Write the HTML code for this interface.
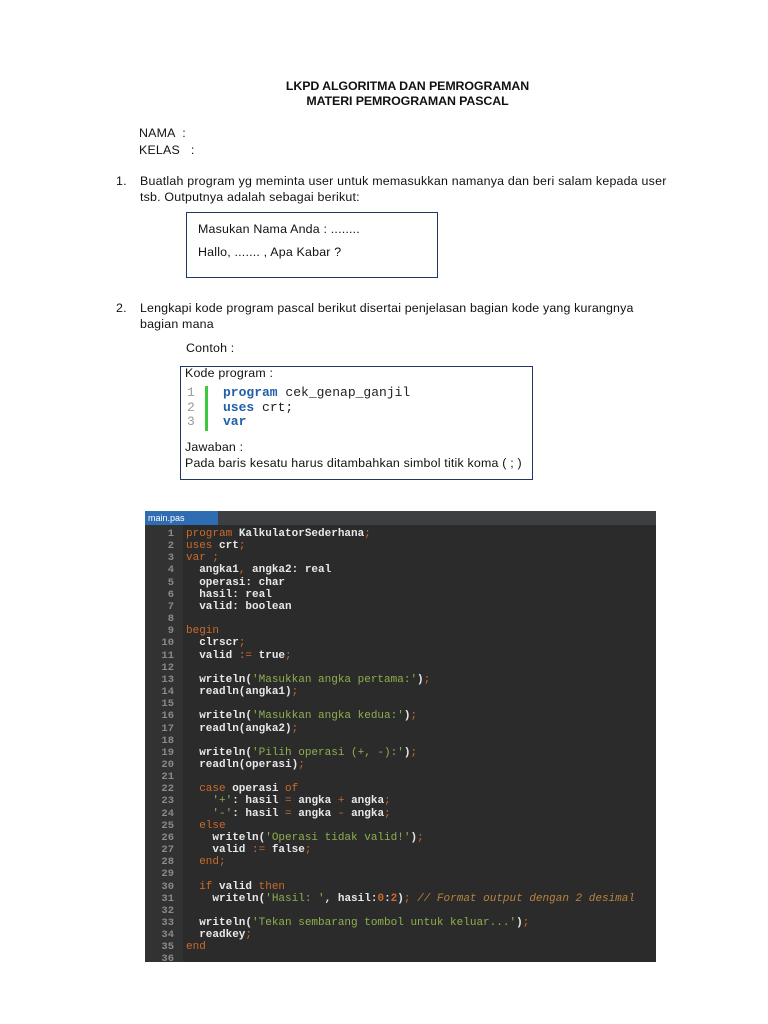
<!DOCTYPE html>
<html><head><meta charset="utf-8"><style>
body{margin:0;width:768px;height:1024px;background:#fff;position:relative;font-family:"Liberation Sans",sans-serif;color:#111;overflow:hidden}
.t{position:absolute;font-size:12.4px;white-space:nowrap;line-height:14px;letter-spacing:0.2px}
.b{font-weight:bold;letter-spacing:-0.1px}
.box{position:absolute;border:1.5px solid #1f3864;background:#fff}
#code{position:absolute;left:145px;top:511px;width:511px;height:451px;background:#2b2b2b;overflow:hidden}
#tabbar{position:absolute;left:0;top:0;width:511px;height:14px;background:#3d3f41}
#tab{position:absolute;left:0;top:0;width:73px;height:14px;background:#2f6db3;color:#fff;font-size:9px;line-height:14px;padding-left:3px;box-sizing:border-box}
#gut{position:absolute;left:0;top:14px;width:38px;height:437px;background:#323232}
.ln{position:absolute;left:0;width:29px;text-align:right;font-family:"Liberation Mono",monospace;font-size:10.5px;color:#8a8a8a;font-weight:bold;line-height:12.15px}
.cl{position:absolute;left:41px;font-family:"Liberation Mono",monospace;font-size:11px;color:#e8e8e8;font-weight:bold;white-space:pre}
.k{color:#cc6a2a;font-weight:normal}.s{color:#8db04e;font-weight:normal}.c{color:#b8843a;font-style:italic;font-weight:normal}.n{color:#cc6a2a}
</style></head><body>
<div class="t b" style="left:0;width:815px;text-align:center;top:79px">LKPD ALGORITMA DAN PEMROGRAMAN</div>
<div class="t b" style="left:0;width:815px;text-align:center;top:94px">MATERI PEMROGRAMAN PASCAL</div>
<div class="t" style="left:139px;top:126px">NAMA &nbsp;:</div>
<div class="t" style="left:139px;top:143px">KELAS &nbsp;&nbsp;:</div>
<div class="t" style="left:116px;top:174px">1.</div>
<div class="t" style="left:140px;top:174px;letter-spacing:0.22px">Buatlah program yg meminta user untuk memasukkan namanya dan beri salam kepada user</div>
<div class="t" style="left:140px;top:190px">tsb. Outputnya adalah sebagai berikut:</div>
<div class="box" style="left:186px;top:212px;width:250px;height:64px"></div>
<div class="t" style="left:198px;top:222px">Masukan Nama Anda : ........</div>
<div class="t" style="left:198px;top:245px">Hallo, ....... , Apa Kabar ?</div>
<div class="t" style="left:116px;top:301px">2.</div>
<div class="t" style="left:140px;top:301px;letter-spacing:0.17px">Lengkapi kode program pascal berikut disertai penjelasan bagian kode yang kurangnya</div>
<div class="t" style="left:140px;top:317px">bagian mana</div>
<div class="t" style="left:186px;top:341px">Contoh :</div>
<div class="box" style="left:180px;top:366px;width:351px;height:112px"></div>
<div class="t" style="left:185px;top:366px">Kode program :</div>
<div style="position:absolute;left:205px;top:386px;width:3px;height:45px;background:#3ec83e"></div>
<div style="position:absolute;left:187px;top:386px;font-family:'Liberation Mono',monospace;font-size:13px;line-height:14.5px;color:#999">1<br>2<br>3</div>
<div style="position:absolute;left:223px;top:386px;font-family:'Liberation Mono',monospace;font-size:13px;line-height:14.5px;color:#222;white-space:pre"><b style="color:#1f5fa8">program</b> cek_genap_ganjil
<b style="color:#1f5fa8">uses</b> crt;
<b style="color:#1f5fa8">var</b></div>
<div class="t" style="left:185px;top:440px">Jawaban :</div>
<div class="t" style="left:185px;top:456px">Pada baris kesatu harus ditambahkan simbol titik koma ( ; )</div>

<div id="code"><div id="tabbar"></div><div id="tab">main.pas</div><div id="gut"></div>
<div style="position:absolute;left:0;top:17px;width:511px">
<div class="ln" style="top:0">1<br>2<br>3<br>4<br>5<br>6<br>7<br>8<br>9<br>10<br>11<br>12<br>13<br>14<br>15<br>16<br>17<br>18<br>19<br>20<br>21<br>22<br>23<br>24<br>25<br>26<br>27<br>28<br>29<br>30<br>31<br>32<br>33<br>34<br>35<br>36</div>
<div class="cl" style="top:0;line-height:12.15px"><span class="k">program</span> KalkulatorSederhana<span class="k">;</span>
<span class="k">uses</span> crt<span class="k">;</span>
<span class="k">var ;</span>
  angka1<span class="k">,</span> angka2: real
  operasi: char
  hasil: real
  valid: boolean

<span class="k">begin</span>
  clrscr<span class="k">;</span>
  valid <span class="k">:=</span> true<span class="k">;</span>

  writeln(<span class="s">'Masukkan angka pertama:'</span>)<span class="k">;</span>
  readln(angka1)<span class="k">;</span>

  writeln(<span class="s">'Masukkan angka kedua:'</span>)<span class="k">;</span>
  readln(angka2)<span class="k">;</span>

  writeln(<span class="s">'Pilih operasi (+, -):'</span>)<span class="k">;</span>
  readln(operasi)<span class="k">;</span>

  <span class="k">case</span> operasi <span class="k">of</span>
    <span class="s">'+'</span>: hasil <span class="k">=</span> angka <span class="k">+</span> angka<span class="k">;</span>
    <span class="s">'-'</span>: hasil <span class="k">=</span> angka <span class="k">-</span> angka<span class="k">;</span>
  <span class="k">else</span>
    writeln(<span class="s">'Operasi tidak valid!'</span>)<span class="k">;</span>
    valid <span class="k">:=</span> false<span class="k">;</span>
  <span class="k">end;</span>

  <span class="k">if</span> valid <span class="k">then</span>
    writeln(<span class="s">'Hasil: '</span>, hasil:<span class="n">0</span>:<span class="n">2</span>)<span class="k">;</span> <span class="c">// Format output dengan 2 desimal</span>

  writeln(<span class="s">'Tekan sembarang tombol untuk keluar...'</span>)<span class="k">;</span>
  readkey<span class="k">;</span>
<span class="k">end</span>
</div>
</div>
</div>
</body></html>
